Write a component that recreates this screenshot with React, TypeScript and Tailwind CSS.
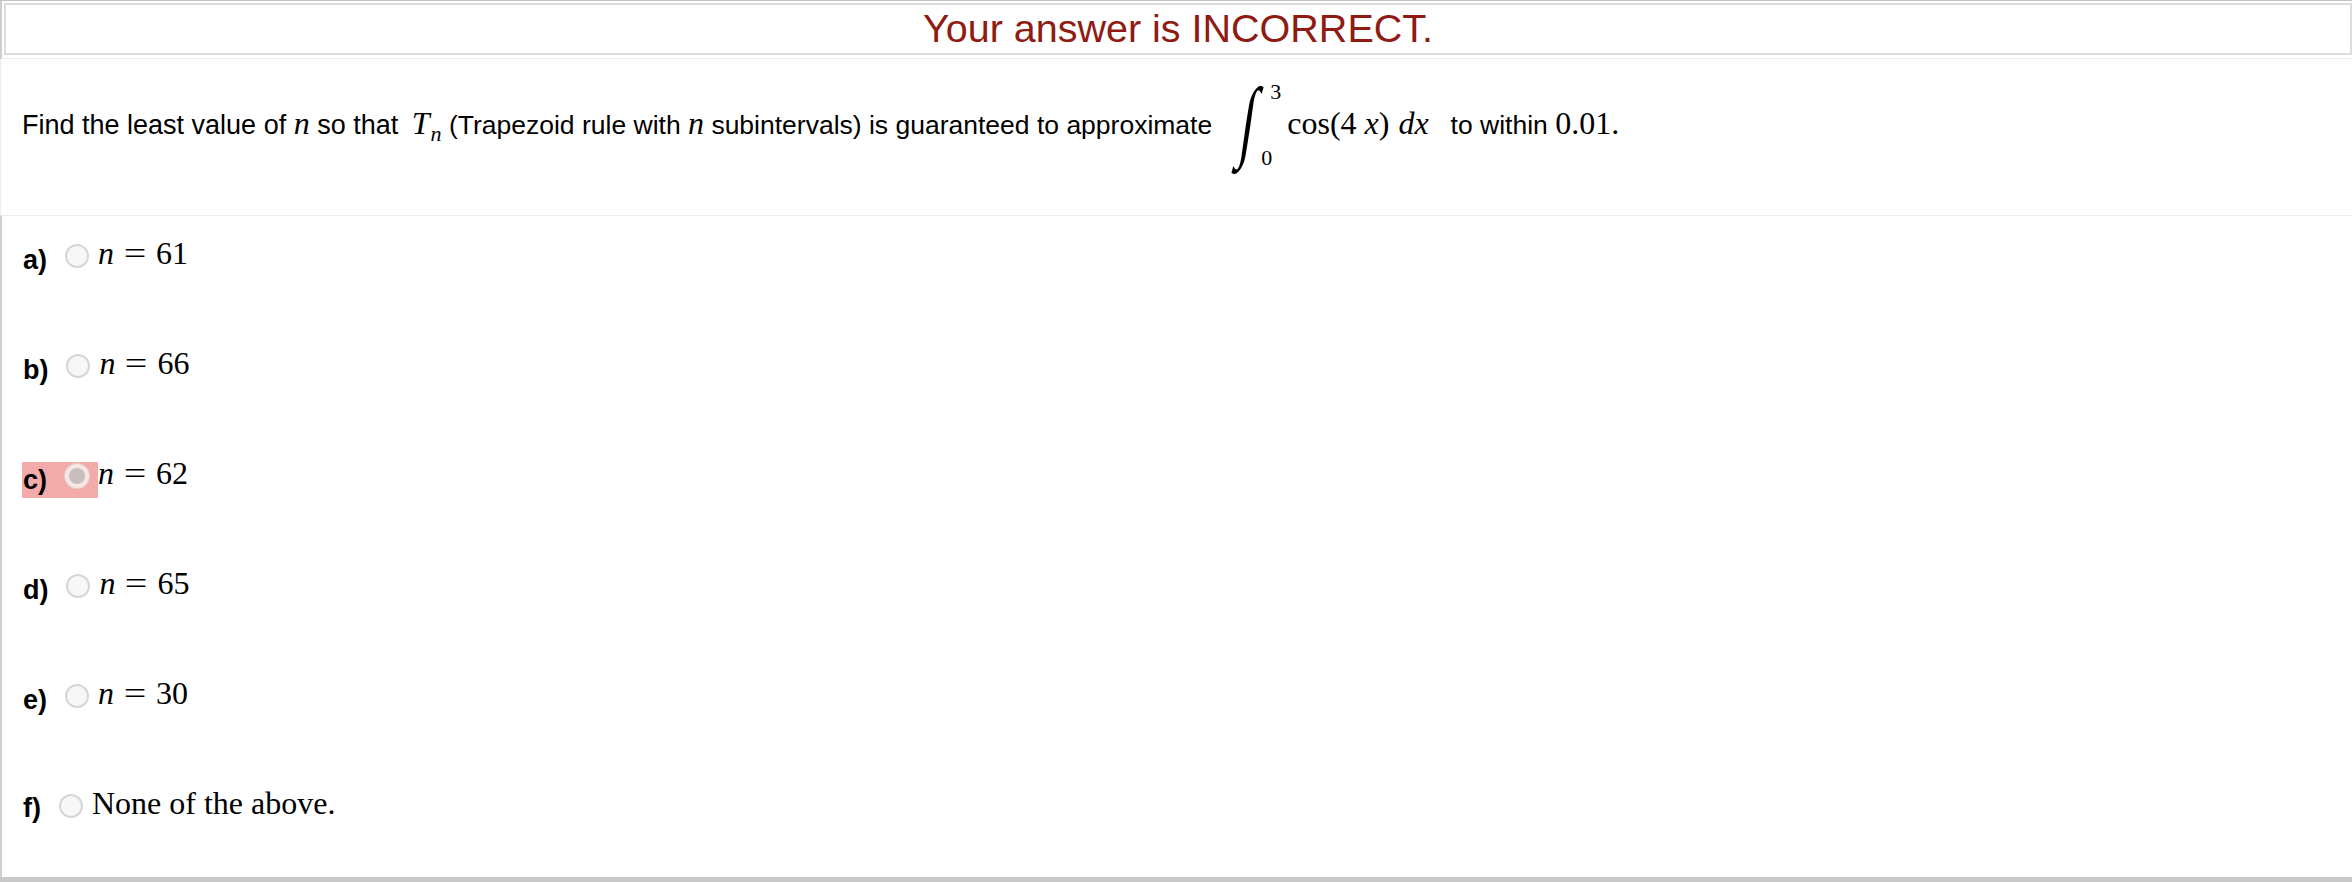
import React from "react";

const serif = "font-['Liberation_Serif','Times_New_Roman',serif]";

function Radio({ checked = false }: { checked?: boolean }) {
  if (checked) {
    return (
      <span className="block w-[24px] h-[24px] rounded-full border-[4px] border-[#f6e6e6] bg-[#cabdbd] shadow-[0_0_0_1px_#e3cfcf]" />
    );
  }
  return <span className="block w-[24px] h-[24px] rounded-full border-2 border-[#d6d6d6] bg-[#f7f7f7]" />;
}

function MathEq({ value }: { value: string }) {
  return (
    <span className={`${serif} text-[32px] leading-none -translate-y-[3px] flex items-baseline`}>
      <span className="italic">n</span>
      <span className="inline-block ml-[12px] scale-x-[1.25]">=</span>
      <span className="ml-[12px]">{value}</span>
    </span>
  );
}

function Row({
  label,
  checked = false,
  children,
  labelShift = "translate-y-[0px]",
}: {
  label: string;
  checked?: boolean;
  children: React.ReactNode;
  labelShift?: string;
}) {
  return (
    <div className="h-[80px] flex items-center">
      <div
        className={`flex items-center h-[36px] pl-[1px] pr-[9px] translate-y-[4px] ${
          checked ? "bg-[#f3aba9]" : ""
        }`}
      >
        <span className={`font-bold text-[27px] leading-none ${labelShift}`}>{label}</span>
        <span className="ml-[18px] -translate-y-[4px]">
          <Radio checked={checked} />
        </span>
      </div>
      {children}
    </div>
  );
}

export default function App() {
  return (
    <div className="w-[2352px] h-[882px] bg-white text-black flex flex-col overflow-hidden border-t border-[#c2c2c2] border-b-[5px] border-b-[#c8c8c8] font-['Liberation_Sans',Arial,sans-serif]">
      {/* feedback */}
      <div className="border-l-2 border-[#cfcfcf] pt-[2px] pl-[2px] pb-[3px]">
        <div className="h-[52px] border-2 border-[#dcdcdc] flex items-center justify-center">
          <span className="text-[39.5px] leading-none text-[#8f1b12]">Your answer is INCORRECT.</span>
        </div>
      </div>

      {/* question */}
      <div className="h-[158px] border-y border-l border-dotted border-[#dcdcdc] flex items-center pl-[21px] pb-[28px]">
        <span className="text-[27px] leading-none whitespace-pre">
          Find the least value of <span className={`${serif} italic text-[32px] leading-none`}>n</span> so that{" "}
          <span className={`${serif} italic text-[32px] leading-none ml-[6px]`}>
            T<span className="text-[22px] relative top-[7px] ml-[1px]">n</span>
          </span>
          <span className="text-[26.5px]">
            {" "}
            (Trapezoid rule with <span className={`${serif} italic text-[32px] leading-none`}>n</span> subintervals) is
            guaranteed to approximate
          </span>
        </span>

        <span className={`${serif} flex items-center ml-[21px]`}>
          <span className="ml-[8px] w-[16px] text-[58px] leading-none -translate-y-[2px] scale-x-[0.9] scale-y-[1.55] -skew-x-[14deg] whitespace-nowrap">
            ∫
          </span>
          <span className="w-[30px] flex flex-col gap-[44px] text-[22px] leading-none translate-y-[2px]">
            <span className="ml-[13px]">3</span>
            <span className="ml-[4px]">0</span>
          </span>
          <span className="text-[32px] leading-none flex items-baseline">
            <span>cos(4</span>
            <span className="italic ml-[8px]">x</span>
            <span>)</span>
            <span className="italic ml-[9px]">d</span>
            <span className="italic">x</span>
          </span>
        </span>

        <span className="ml-[22px] text-[26.5px] leading-none whitespace-pre">
          to within <span className={`${serif} text-[32px] leading-none`}>0.01.</span>
        </span>
      </div>

      {/* options */}
      <div className="flex-1 border-l-2 border-[#cfcfcf] pl-[20px] flex flex-col gap-[30px]">
        <Row label="a)">
          <MathEq value="61" />
        </Row>
        <Row label="b)">
          <MathEq value="66" />
        </Row>
        <Row label="c)" checked>
          <MathEq value="62" />
        </Row>
        <Row label="d)">
          <MathEq value="65" />
        </Row>
        <Row label="e)">
          <MathEq value="30" />
        </Row>
        <Row label="f)" labelShift="-translate-y-[2px]">
          <span className={`${serif} text-[32px] leading-none -translate-y-[3px] whitespace-pre`}>
            None of the above.
          </span>
        </Row>
      </div>
    </div>
  );
}
